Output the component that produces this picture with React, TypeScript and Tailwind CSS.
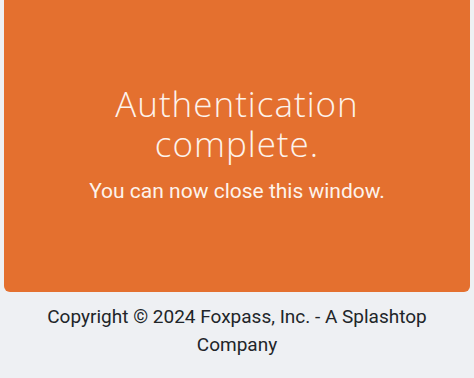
export default function App() {
  return (
    <div className="min-h-[378px] w-[474px] bg-[#eef0f3] px-1" style={{ fontFamily: "Roboto, 'Liberation Sans', sans-serif" }}>
      <div className="flex h-[292px] flex-col items-center justify-center rounded-b-[6px] bg-[#e4702f] px-6 pb-[4px] text-center text-white">
        <h1 className="text-[35px] font-light leading-[40px] tracking-[1px] text-[#fdf3ec]" style={{ fontFamily: "'Open Sans', 'Noto Sans', sans-serif" }}>
          Authentication
          <br />
          complete.
        </h1>
        <p className="mt-[13px] text-[21px] leading-[28px] text-[#fdf3ec]">You can now close this window.</p>
      </div>
      <footer className="px-3 pb-[19px] pt-[11px] text-center text-[19px] leading-[28px] text-[#212529]">
        Copyright © 2024 Foxpass, Inc. - A Splashtop Company
      </footer>
    </div>
  );
}
